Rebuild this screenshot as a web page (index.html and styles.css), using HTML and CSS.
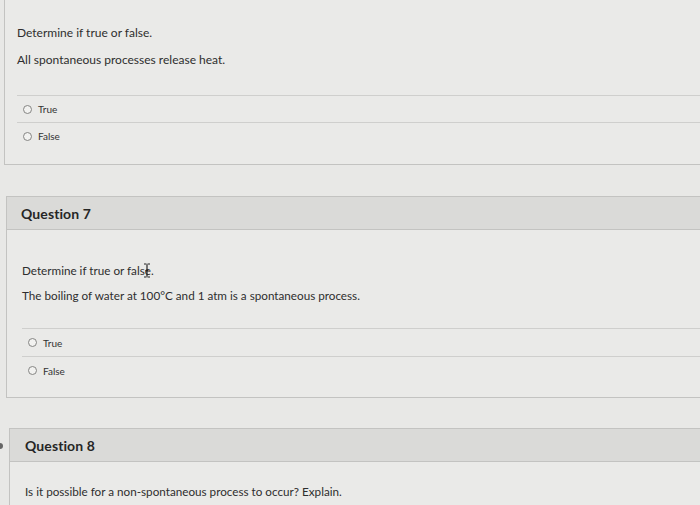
FILE: index.html
```html
<!DOCTYPE html>
<html lang="en">
<head>
<meta charset="utf-8">
<title>Quiz</title>
<link rel="stylesheet" href="styles.css">
</head>
<body>
<div class="page">
  <section class="question q6">
    <div class="q-body">
      <p class="q-text">Determine if true or false.</p>
      <p class="q-text second">All spontaneous processes release heat.</p>
      <ul class="answers">
        <li class="answer"><span class="radio"></span><span class="label">True</span></li>
        <li class="answer"><span class="radio"></span><span class="label">False</span></li>
      </ul>
    </div>
  </section>

  <section class="question q7">
    <header class="q-header"><h2 class="q-title">Question 7</h2></header>
    <div class="q-body">
      <p class="q-text cursor-line">Determine if true or false.<svg class="ibeam" width="8" height="15" viewBox="0 0 8 15"><path d="M1 1h2.5M4.5 1H7M4 1.5v12M1 14h2.5M4.5 14H7M2.5 7.5h3" stroke="#222" stroke-width="1.2" fill="none"/></svg></p>
      <p class="q-text second">The boiling of water at 100°C and 1 atm is a spontaneous process.</p>
      <ul class="answers">
        <li class="answer"><span class="radio"></span><span class="label">True</span></li>
        <li class="answer"><span class="radio"></span><span class="label">False</span></li>
      </ul>
    </div>
  </section>

  <section class="question q8">
    <span class="nav-dot"></span>
    <header class="q-header"><h2 class="q-title">Question 8</h2></header>
    <div class="q-body">
      <p class="q-text">Is it possible for a non-spontaneous process to occur? Explain.</p>
    </div>
  </section>
</div>
</body>
</html>
```
FILE: styles.css
```css
html, body {
  margin: 0;
  padding: 0;
}
body {
  width: 700px;
  height: 505px;
  overflow: hidden;
  background: #e8e8e6;
  font-family: Lato, "Open Sans", "Liberation Sans", sans-serif;
  color: #2b2b2b;
}
.page {
  display: flex;
  flex-direction: column;
  width: 700px;
}
.question {
  position: relative;
  border: 1px solid #c3c3c1;
  border-right: none;
  background: #eaeae8;
}
.q6 {
  margin-left: 4px;
  border-top: none;
}
.q7 {
  margin-left: 6px;
  margin-top: 31px;
}
.q8 {
  margin-left: 9px;
  margin-top: 30px;
  border-bottom: none;
}
.q-header {
  height: 32px;
  display: flex;
  align-items: center;
  background: #dadad8;
  border-bottom: 1px solid #c3c3c1;
  padding-left: 14px;
}
.q8 .q-header { padding-left: 15px; }
.q-title {
  margin: 0;
  font-size: 14px;
  font-weight: 700;
  color: #262626;
  letter-spacing: 0.1px;
}
.q-body {
  padding: 32px 0 13px 15px;
}
.q6 .q-body {
  padding: 25px 0 15px 12px;
}
.q8 .q-body {
  padding: 21px 0 20px 15px;
}
.q-text {
  margin: 0;
  font-size: 12px;
  line-height: 16px;
  color: #2e2e2e;
}
.q7 .q-text,
.q8 .q-text {
  font-size: 11.7px;
}
.q-text.second {
  margin-top: 9px;
}
.q6 .q-text.second {
  margin-top: 11px;
}
.cursor-line {
  position: relative;
}
.ibeam {
  position: absolute;
  left: 121px;
  top: 1px;
}
.answers {
  list-style: none;
  margin: 25px 0 0 0;
  padding: 0;
}
.q6 .answers {
  margin-top: 27px;
}
.answer {
  border-top: 1px solid #cfcfcd;
  height: 27px;
  display: flex;
  align-items: center;
  padding-left: 6px;
}
.q6 .answer {
  height: 26px;
}
.radio {
  width: 7px;
  height: 7px;
  border: 1px solid #858583;
  border-radius: 50%;
  background: #f2f2f0;
  flex: none;
}
.label {
  margin-left: 6px;
  font-size: 10px;
  color: #333;
}
.nav-dot {
  position: absolute;
  left: -13px;
  top: 14px;
  width: 6px;
  height: 6px;
  border-radius: 50%;
  background: #666;
}
```
